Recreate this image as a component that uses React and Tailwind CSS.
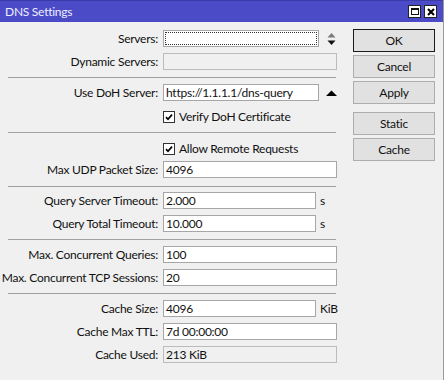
import React from 'react';

const font = { fontFamily: 'Lato, "Liberation Sans", Arial, sans-serif' };

function Row({ label, className = '', children }) {
  return (
    <div className={`flex h-[17px] items-center ${className}`}>
      <div className="w-[158px] shrink-0 whitespace-nowrap text-right">{label}</div>
      <div className="ml-[5px] flex items-center">{children}</div>
    </div>
  );
}

function Field({ value = '', width = 'w-[174px]', disabled = false, focus = false }) {
  return (
    <div
      className={`relative flex h-[17px] items-center border px-[2px] leading-none ${width} ${
        disabled ? 'border-[#bcbcbc] bg-[#f0f0f0]' : 'border-[#a6a6a6] bg-white'
      }`}
    >
      {focus && <span className="absolute inset-[1px] border border-dotted border-[#333]" />}
      <span className="whitespace-nowrap">{value}</span>
    </div>
  );
}

function Check({ label, className = '' }) {
  return (
    <Row label="" className={className}>
      <div className="flex items-center">
        <span className="flex h-[12px] w-[12px] items-center justify-center border border-[#333] bg-white">
          <svg width="8" height="8" viewBox="0 0 8 8">
            <path d="M1 4.2 L3 6.3 L7 1.6" fill="none" stroke="#000" strokeWidth="1.7" />
          </svg>
        </span>
        <span className="ml-[4px] whitespace-nowrap">{label}</span>
      </div>
    </Row>
  );
}

function Sep({ className = '' }) {
  return <div className={`ml-[8px] h-px w-[328px] bg-[#a0a0a0] ${className}`} />;
}

function Button({ children, main = false, className = '' }) {
  return (
    <div
      className={`flex h-[23px] w-[82px] items-center justify-center border bg-[#e1e1e1] ${
        main ? 'border-[#1a1a1a]' : 'border-[#adadad]'
      } ${className}`}
    >
      {children}
    </div>
  );
}

export default function App() {
  return (
    <div
      className="h-[380px] w-[444px] overflow-hidden border-r border-[#9a9a9a] bg-[#f0f0f0] text-[12px] tracking-[-0.25px] text-[#111]"
      style={font}
    >
      <div className="flex h-[22px] items-center justify-between border-t border-[#3a3aa8] bg-[#4b4bc8] pl-[5px] pr-[6px]">
        <span className="text-[12px] text-[#eeeeff]">DNS Settings</span>
        <div className="flex items-center gap-[3px]">
          <span className="flex h-[13px] w-[13px] items-center justify-center border border-[#222] bg-white">
            <span className="h-[7px] w-[8px] border border-t-2 border-[#111]" />
          </span>
          <span className="flex h-[13px] w-[13px] items-center justify-center border border-[#222] bg-white">
            <svg width="8" height="8" viewBox="0 0 8 8">
              <path d="M1 1 L7 7 M7 1 L1 7" stroke="#000" strokeWidth="2" />
            </svg>
          </span>
        </div>
      </div>

      <div className="flex">
        <div className="w-[340px] pt-[8px]">
          <Row label="Servers:">
            <Field width="w-[156px]" focus />
            <svg className="ml-[8px]" width="9" height="14" viewBox="0 0 9 14">
              <path d="M0.5 5.5 L4.5 1 L8.5 5.5 Z" fill="#7a7a7a" />
              <path d="M0.5 8.5 L4.5 13 L8.5 8.5 Z" fill="#111" />
            </svg>
          </Row>
          <Row label="Dynamic Servers:" className="mt-[6px]">
            <Field disabled />
          </Row>
          <Sep className="mt-[7px]" />
          <Row label="Use DoH Server:" className="mt-[6px]">
            <Field width="w-[156px]" value="https://1.1.1.1/dns-query" />
            <svg className="ml-[7px]" width="11" height="6" viewBox="0 0 11 6">
              <path d="M0 6 L5.5 0.5 L11 6 Z" fill="#000" />
            </svg>
          </Row>
          <Check label="Verify DoH Certificate" className="mt-[7px]" />
          <Sep className="mt-[7px]" />
          <Check label="Allow Remote Requests" className="mt-[7px]" />
          <Row label="Max UDP Packet Size:" className="mt-[4px]">
            <Field value="4096" />
          </Row>
          <Sep className="mt-[8px]" />
          <Row label="Query Server Timeout:" className="mt-[5px]">
            <Field width="w-[153px]" value="2.000" />
            <span className="ml-[4px]">s</span>
          </Row>
          <Row label="Query Total Timeout:" className="mt-[6px]">
            <Field width="w-[153px]" value="10.000" />
            <span className="ml-[4px]">s</span>
          </Row>
          <Sep className="mt-[7px]" />
          <Row label="Max. Concurrent Queries:" className="mt-[6px]">
            <Field value="100" />
          </Row>
          <Row label="Max. Concurrent TCP Sessions:" className="mt-[6px]">
            <Field value="20" />
          </Row>
          <Sep className="mt-[7px]" />
          <Row label="Cache Size:" className="mt-[6px]">
            <Field width="w-[153px]" value="4096" />
            <span className="ml-[4px]">KiB</span>
          </Row>
          <Row label="Cache Max TTL:" className="mt-[6px]">
            <Field value="7d 00:00:00" />
          </Row>
          <Row label="Cache Used:" className="mt-[6px]">
            <Field disabled value="213 KiB" />
          </Row>
        </div>

        <div className="ml-[13px] flex flex-col pt-[7px]">
          <Button main>OK</Button>
          <Button className="mt-[3px]">Cancel</Button>
          <Button className="mt-[3px]">Apply</Button>
          <Button className="mt-[8px]">Static</Button>
          <Button className="mt-[3px]">Cache</Button>
        </div>
      </div>
    </div>
  );
}
